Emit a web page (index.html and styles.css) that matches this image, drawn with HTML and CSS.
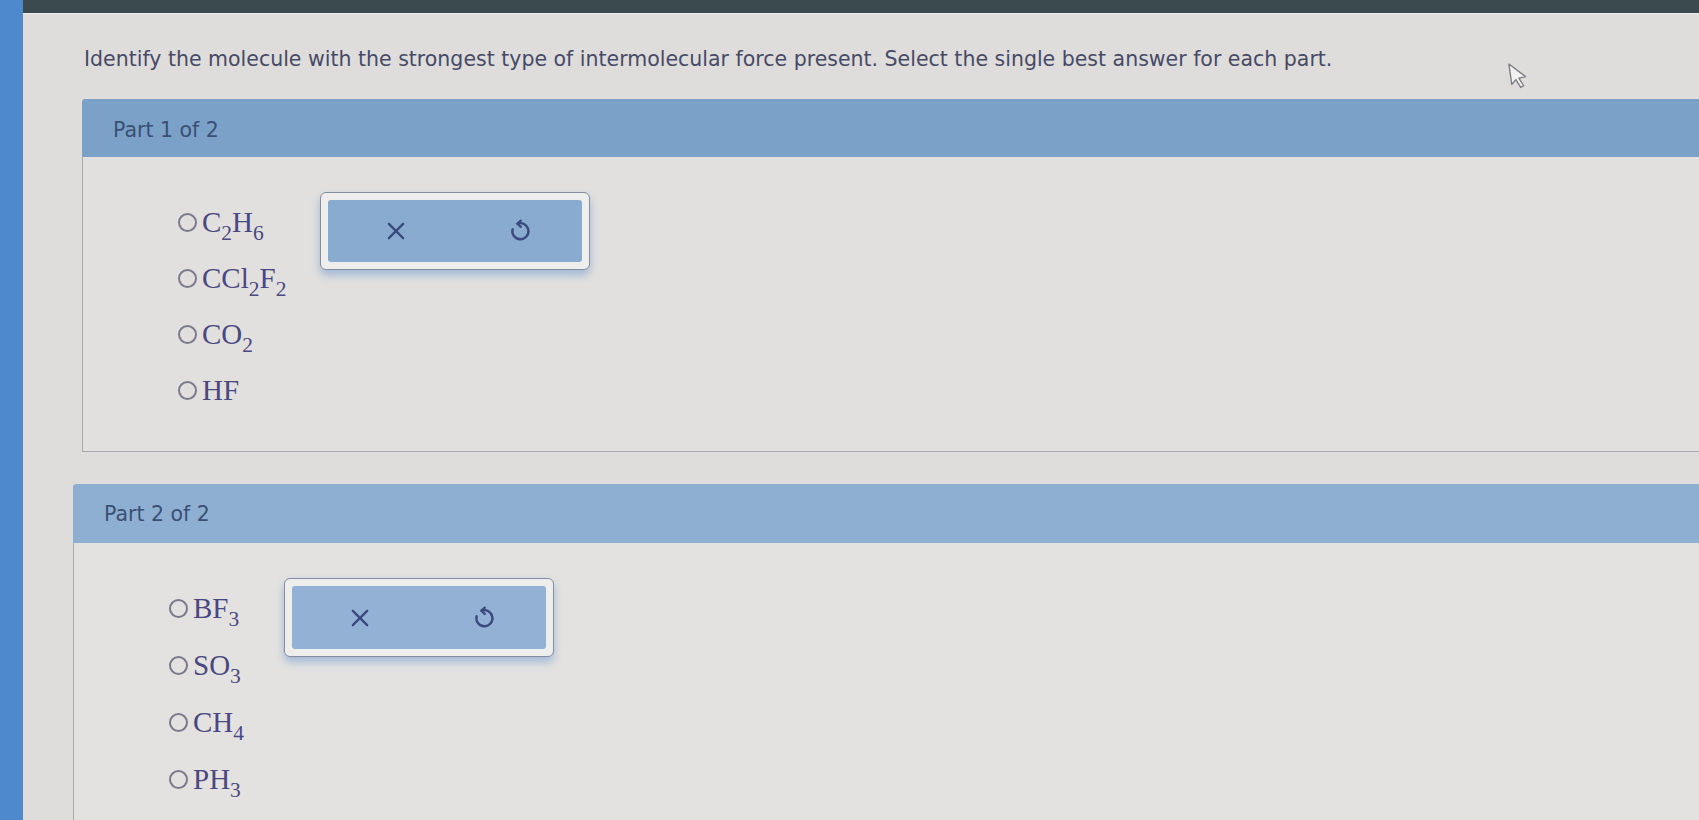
FILE: index.html
```html
<!DOCTYPE html>
<html lang="en">
<head>
<meta charset="utf-8">
<title>Intermolecular forces</title>
<link rel="stylesheet" href="styles.css">
</head>
<body>
<div class="screen">
  <div class="side"></div>
  <div class="main">
    <div class="topbar"></div>
    <div class="content">
      <p class="prompt">Identify the molecule with the strongest type of intermolecular force present. Select the single best answer for each part.</p>

      <section class="part part-1">
        <div class="part-head">Part 1 of 2</div>
        <div class="part-body">
          <ul class="options">
            <li class="option"><span class="radio"></span><span class="formula">C<sub>2</sub>H<sub>6</sub></span></li>
            <li class="option"><span class="radio"></span><span class="formula">CCl<sub>2</sub>F<sub>2</sub></span></li>
            <li class="option"><span class="radio"></span><span class="formula">CO<sub>2</sub></span></li>
            <li class="option"><span class="radio"></span><span class="formula">HF</span></li>
          </ul>
          <div class="tools">
            <div class="tools-inner">
              <span class="tool tool-clear"><svg class="icon" viewBox="0 0 20 20"><path d="M4.5 4.5 L15.5 15.5 M15.5 4.5 L4.5 15.5"/></svg></span>
              <span class="tool tool-undo"><svg class="icon" viewBox="0 0 20 20"><path d="M8 4.4 A6.2 6.2 0 1 1 4.3 8.6"/><path d="M10.6 2.1 L8 4.4 L10.6 6.8"/></svg></span>
            </div>
          </div>
        </div>
      </section>

      <section class="part part-2">
        <div class="part-head">Part 2 of 2</div>
        <div class="part-body">
          <ul class="options">
            <li class="option"><span class="radio"></span><span class="formula">BF<sub>3</sub></span></li>
            <li class="option"><span class="radio"></span><span class="formula">SO<sub>3</sub></span></li>
            <li class="option"><span class="radio"></span><span class="formula">CH<sub>4</sub></span></li>
            <li class="option"><span class="radio"></span><span class="formula">PH<sub>3</sub></span></li>
          </ul>
          <div class="tools">
            <div class="tools-inner">
              <span class="tool tool-clear"><svg class="icon" viewBox="0 0 20 20"><path d="M4.5 4.5 L15.5 15.5 M15.5 4.5 L4.5 15.5"/></svg></span>
              <span class="tool tool-undo"><svg class="icon" viewBox="0 0 20 20"><path d="M8 4.4 A6.2 6.2 0 1 1 4.3 8.6"/><path d="M10.6 2.1 L8 4.4 L10.6 6.8"/></svg></span>
            </div>
          </div>
        </div>
      </section>
    </div>
  </div>
  <svg class="cursor" viewBox="0 0 18 27"><path d="M1.5 1.5 L1.5 21 L6 17 L9.5 25 L12.5 23.8 L9 16 L15.5 15.5 Z"/></svg>
</div>
</body>
</html>
```

FILE: styles.css
```css
html, body {
  margin: 0;
  padding: 0;
}

body {
  width: 1699px;
  height: 820px;
  overflow: hidden;
  background: #dfdedc;
  font-family: "DejaVu Sans", Verdana, sans-serif;
}

.screen {
  position: relative;
  display: flex;
  height: 820px;
}

.side {
  width: 23px;
  flex: none;
  background: #4d89cc;
}

.main {
  flex: 1;
  display: flex;
  flex-direction: column;
  min-width: 0;
}

.topbar {
  height: 13px;
  flex: none;
  background: #3b4a4f;
  border-bottom: 1px solid #eeeeec;
}

.content {
  padding: 33px 0 0 50px;
  background: #dedddb;
  flex: 1;
}

.prompt {
  margin: 0 0 27px 11px;
  font-size: 20.5px;
  line-height: 25px;
  color: #474a66;
  white-space: nowrap;
}

.part-1 {
  margin-left: 9px;
}

.part-2 {
  margin-top: 32px;
}

.part-head {
  height: 58px;
  display: flex;
  align-items: center;
  padding-left: 31px;
  border-radius: 3px 0 0 0;
  font-size: 20.5px;
  color: #3a5075;
}

.part-1 .part-head {
  background: #7ba1c9;
  padding-top: 3px;
  height: 55px;
}

.part-2 .part-head {
  height: 59px;
  background: #8eafd2;
}

.part-body {
  display: flex;
  align-items: flex-start;
  gap: 34px;
  padding: 37px 0 33px 95px;
  border-left: 1px solid #a8a8ae;
  border-bottom: 1px solid #a8a8ae;
  background: #e1e0de;
}

.part-2 .part-body {
  border-bottom: none;
  background: #e3e2e0;
  gap: 40px;
}

.options {
  list-style: none;
  margin: 0;
  padding: 0;
}

.option {
  height: 56px;
  display: flex;
  align-items: center;
  gap: 5px;
}

.part-2 .option {
  height: 57px;
}

.radio {
  width: 15px;
  height: 15px;
  flex: none;
  border: 2px solid #7b7a8c;
  border-radius: 50%;
}

.formula {
  font-family: "Liberation Serif", "Times New Roman", serif;
  font-size: 29px;
  line-height: 1;
  color: #4a4880;
}

.formula sub {
  font-size: 0.74em;
  vertical-align: -0.36em;
  line-height: 0;
}

.tools {
  margin-top: -2px;
  padding: 7px;
  border: 1px solid #838ca0;
  border-radius: 6px;
  background: #eeeeec;
  box-shadow: 0 5px 9px rgba(85, 135, 205, 0.45);
}

.tools-inner {
  width: 254px;
  height: 62px;
  display: flex;
  border-radius: 3px;
  background: #89abd0;
}

.part-2 .tools-inner {
  height: 63px;
  background: #92b1d4;
}

.tool {
  flex: 1;
  display: flex;
  align-items: center;
  justify-content: center;
}

.tool-clear {
  padding-left: 6px;
}

.icon {
  width: 26px;
  height: 26px;
  fill: none;
  stroke: #3a4a7c;
  stroke-width: 1.8;
  stroke-linecap: round;
  stroke-linejoin: round;
}

.cursor {
  position: absolute;
  left: 1509px;
  top: 61px;
  width: 19px;
  height: 29px;
  fill: #f2f2f0;
  stroke: #7d7d85;
  stroke-width: 1.3;
  stroke-linejoin: round;
  transform: rotate(-8deg);
}
```
